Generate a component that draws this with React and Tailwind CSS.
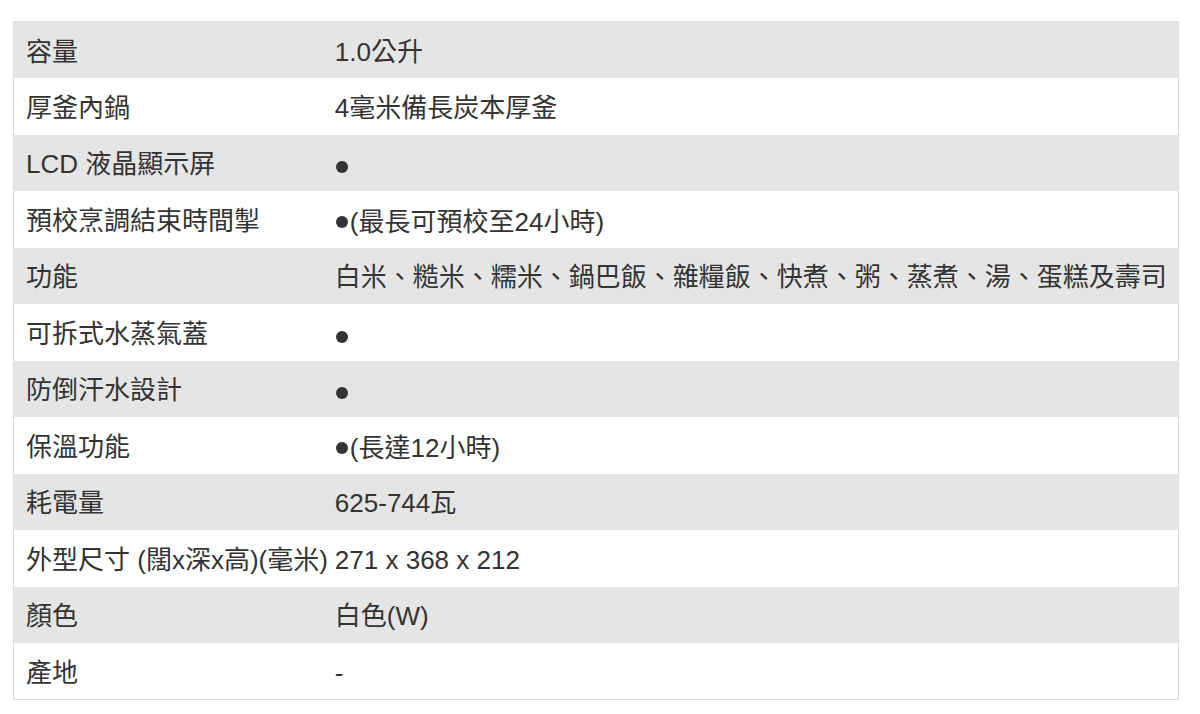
const rows = [
  ["容量", "1.0公升"],
  ["厚釜內鍋", "4毫米備長炭本厚釜"],
  ["LCD 液晶顯示屏", "●"],
  ["預校烹調結束時間掣", "●(最長可預校至24小時)"],
  ["功能", "白米、糙米、糯米、鍋巴飯、雜糧飯、快煮、粥、蒸煮、湯、蛋糕及壽司"],
  ["可拆式水蒸氣蓋", "●"],
  ["防倒汗水設計", "●"],
  ["保溫功能", "●(長達12小時)"],
  ["耗電量", "625-744瓦"],
  ["外型尺寸 (闊x深x高)(毫米)", "271 x 368 x 212"],
  ["顏色", "白色(W)"],
  ["產地", "-"],
];

function Value({ text }) {
  if (text.startsWith("●")) {
    return (
      <span className="inline-flex items-center">
        <span className="inline-block w-[12px] h-[12px] rounded-full bg-[#333] mr-[2px] ml-[1px]" aria-label="●"></span>
        <span>{text.slice(1)}</span>
      </span>
    );
  }
  return <span>{text}</span>;
}

export default function App() {
  return (
    <div className="w-[1200px] h-[714px] bg-white pt-[21px] pl-[13px]" style={{ fontFamily: '"Liberation Sans", "Noto Sans CJK TC", sans-serif' }}>
      <table className="w-[1166px] border-collapse border border-[#dcdcdc] text-[26px] text-[#333] leading-none">
        <tbody>
          {rows.map(([k, v], i) => (
            <tr key={i} className={i % 2 === 0 ? "bg-[#e5e5e5] h-[56.5px]" : "bg-white h-[56.5px]"}>
              <td className="w-[310px] pl-[12px] pt-[3px] whitespace-nowrap align-middle">{k}</td>
              <td className="pl-[7px] pt-[3px] whitespace-nowrap align-middle"><Value text={v} /></td>
            </tr>
          ))}
        </tbody>
      </table>
    </div>
  );
}
